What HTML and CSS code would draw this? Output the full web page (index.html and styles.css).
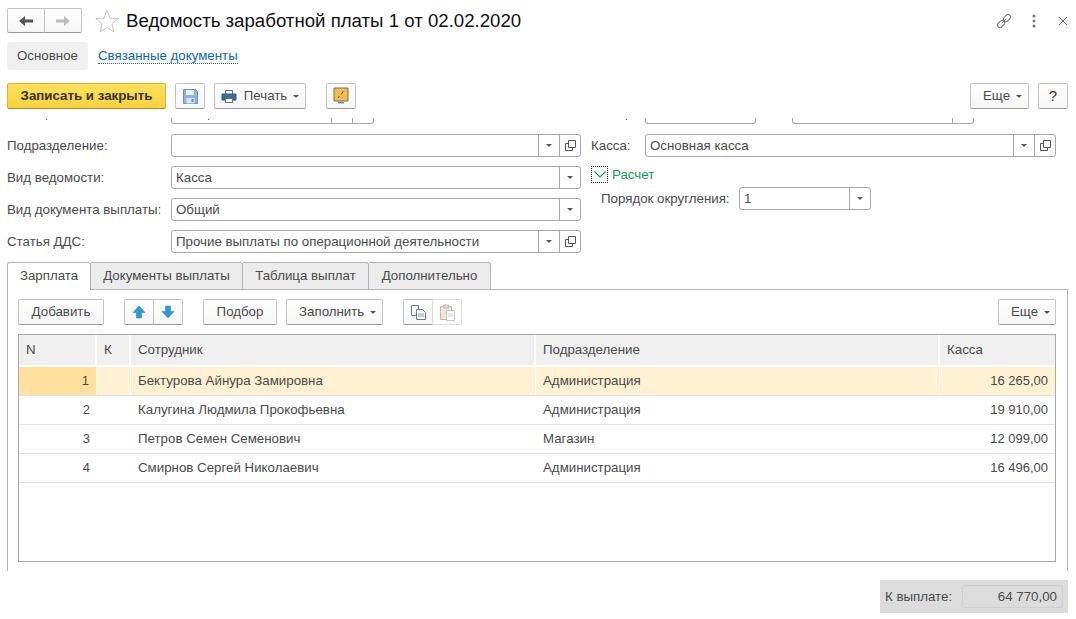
FILE: index.html
```html
<!DOCTYPE html>
<html lang="ru">
<head>
    <meta charset="UTF-8">
    <title>Ведомость заработной платы</title>
    <link rel="stylesheet" href="styles.css">
</head>
<body>
<!-- заголовок -->
<header class="title-bar">
    <div class="btn-group history">
        <button class="btn icon-btn"><svg width="16" height="12" viewBox="0 0 16 12"><path d="M1 6l6-5v3.500h8v3H7V11z" fill="#555"/></svg></button>
        <button class="btn icon-btn"><svg width="16" height="12" viewBox="0 0 16 12"><path d="M15 6L9 1v3.500H1v3h8V11z" fill="#bbb"/></svg></button>
    </div>
    <svg class="star" width="24" height="24" viewBox="0 0 24 24"><path d="M12 1.500l3 7.600 8.200.6-6.300 5.200 2 8-6.900-4.400-6.900 4.400 2-8L.8 9.700 9 9.100z" fill="#fff" stroke="#c4c4c4"/></svg>
    <h1 class="title">Ведомость заработной платы 1 от 02.02.2020</h1>
    <div class="window-tools">
        <svg width="16" height="16" viewBox="0 0 16 16" fill="none" stroke="#777" stroke-width="1"><rect x="7" y="2.500" width="8" height="5" rx="2.500" transform="rotate(-45 11 5)"/><rect x="1" y="8.500" width="8" height="5" rx="2.500" transform="rotate(-45 5 11)"/><path d="M6 10l4-4"/></svg>
        <svg class="dots" width="4" height="14" viewBox="0 0 4 14"><circle cx="2" cy="2" r="1.500" fill="#777"/><circle cx="2" cy="7" r="1.500" fill="#777"/><circle cx="2" cy="12" r="1.500" fill="#777"/></svg>
        <svg width="10" height="10" viewBox="0 0 10 10"><path d="M1 1l8 8M9 1l-8 8" stroke="#666" stroke-width="1"/></svg>
    </div>
</header>

<!-- навигация -->
<nav class="nav-bar">
    <span class="nav-current">Основное</span>
    <a class="nav-link">Связанные документы</a>
</nav>

<!-- командная панель -->
<div class="toolbar main-toolbar">
    <button class="btn btn-primary">Записать и закрыть</button>
    <button class="btn icon-btn save"><svg width="15" height="15" viewBox="0 0 15 15"><path d="M.5.5h12l2 2v12H.5z" fill="#8fb4d9" stroke="#6d93bb"/><path d="M3 1h8v5H3z" fill="#eef3f9"/><path d="M3.500 9h8v5.500h-8z" fill="#d6e2ee"/><path d="M8.500 10h2v3h-2z" fill="#6d93bb"/></svg></button>
    <button class="btn print"><svg width="16" height="15" viewBox="0 0 16 15"><path d="M4.500 1.500h7v4h-7z" fill="#fff" stroke="#56708c"/><path d="M1 5h14v6H1z" fill="#3f6f98" stroke="#2f5a80"/><path d="M4.500 9.500h7v4h-7z" fill="#fff" stroke="#56708c"/></svg><span>Печать</span><i class="caret"></i></button>
    <button class="btn icon-btn note"><svg width="16" height="18" viewBox="0 0 16 18"><path d="M1 1h14v13H1z" fill="#efbd52" stroke="#7f7350"/><path d="M5 11l1.500-2M8 7.500L10.500 4" stroke="#6b5a20" stroke-width="1"/><path d="M5 15.500h6" stroke="#8a8a8a" stroke-width="2"/></svg></button>
    <div class="spacer"></div>
    <button class="btn more">Еще<i class="caret"></i></button>
    <button class="btn help">?</button>
</div>

<!-- реквизиты -->
<section class="form-area">
    <div class="form-cut">
        <i class="cut-mark mark-one"></i>
        <div class="cut-field cut-one"><i class="cut-mark mark-inner"></i><i class="cut-cell first-cell"></i><i class="cut-cell"></i></div>
        <i class="cut-mark mark-two"></i>
        <div class="cut-field cut-two"></div>
        <div class="cut-field cut-three"><i class="cut-cell first-cell"></i></div>
    </div>
    <div class="form-cols">
        <div class="form-left">
            <div class="form-row">
                <label>Подразделение:</label>
                <div class="field"><span class="value"></span><i class="field-btn"><b class="caret"></b></i><i class="field-btn"><svg width="11" height="11" viewBox="0 0 11 11"><path d="M3.500.5h7v7h-7z M3.500 3.500H.5v7h7V7.500" fill="none" stroke="#555"/></svg></i></div>
            </div>
            <div class="form-row">
                <label>Вид ведомости:</label>
                <div class="field"><span class="value">Касса</span><i class="field-btn"><b class="caret"></b></i></div>
            </div>
            <div class="form-row">
                <label>Вид документа выплаты:</label>
                <div class="field"><span class="value">Общий</span><i class="field-btn"><b class="caret"></b></i></div>
            </div>
            <div class="form-row">
                <label>Статья ДДС:</label>
                <div class="field"><span class="value">Прочие выплаты по операционной деятельности</span><i class="field-btn"><b class="caret"></b></i><i class="field-btn"><svg width="11" height="11" viewBox="0 0 11 11"><path d="M3.500.5h7v7h-7z M3.500 3.500H.5v7h7V7.500" fill="none" stroke="#555"/></svg></i></div>
            </div>
        </div>
        <div class="form-right">
            <div class="form-row">
                <label class="label-short">Касса:</label>
                <div class="field"><span class="value">Основная касса</span><i class="field-btn"><b class="caret"></b></i><i class="field-btn"><svg width="11" height="11" viewBox="0 0 11 11"><path d="M3.500.5h7v7h-7z M3.500 3.500H.5v7h7V7.500" fill="none" stroke="#555"/></svg></i></div>
            </div>
            <div class="group-head">
                <span class="group-toggle"><svg width="12" height="7" viewBox="0 0 12 7"><path d="M.5.5L6 6 11.500.5" fill="none" stroke="#0f9d58" stroke-width="1.200"/></svg></span>
                <span class="group-title">Расчет</span>
            </div>
            <div class="form-row group-row">
                <label>Порядок округления:</label>
                <div class="field field-small"><span class="value">1</span><i class="field-btn"><b class="caret"></b></i></div>
            </div>
        </div>
    </div>
</section>

<!-- вкладки -->
<div class="tabs">
    <span class="tab active">Зарплата</span>
    <span class="tab">Документы выплаты</span>
    <span class="tab">Таблица выплат</span>
    <span class="tab">Дополнительно</span>
</div>
<main class="tab-panel">
    <div class="toolbar panel-toolbar">
        <button class="btn add">Добавить</button>
        <div class="btn-group arrows">
            <button class="btn icon-btn"><svg width="14" height="14" viewBox="0 0 14 14"><path d="M7 1l6 6.500H9.500V13h-5V7.500H1z" fill="#2b9bd6" stroke="#1f7fb3" stroke-width=".5"/></svg></button>
            <button class="btn icon-btn"><svg width="14" height="14" viewBox="0 0 14 14"><path d="M7 13L1 6.500h3.500V1h5v5.500H13z" fill="#2b9bd6" stroke="#1f7fb3" stroke-width=".5"/></svg></button>
        </div>
        <button class="btn pick">Подбор</button>
        <button class="btn fill">Заполнить<i class="caret"></i></button>
        <div class="btn-group clip">
            <button class="btn icon-btn"><svg width="17" height="17" viewBox="0 0 17 17"><path d="M1.500 1.500h7v10h-7z" fill="#fff" stroke="#6c7f92"/><path d="M6.500 5.500h6l3 3v7h-9z" fill="#fff" stroke="#6c7f92"/><path d="M8 10h6M8 12h6" stroke="#8a9aa9"/></svg></button>
            <button class="btn icon-btn off"><svg width="17" height="17" viewBox="0 0 17 17"><path d="M1.500 2.500h11v13h-11z" fill="#f1e4d8" stroke="#cdb5a3"/><path d="M4.500 1h5v3h-5z" fill="#ddd" stroke="#bbb"/><path d="M7.500 6.500h8v10h-8z" fill="#fff" stroke="#c5c5c5"/><path d="M9 10h5M9 12h5" stroke="#ccc"/></svg></button>
        </div>
        <div class="spacer"></div>
        <button class="btn more more-small">Еще<i class="caret"></i></button>
    </div>
    <div class="grid">
        <div class="grid-row grid-head">
            <div class="cell">N</div>
            <div class="cell">К</div>
            <div class="cell">Сотрудник</div>
            <div class="cell">Подразделение</div>
            <div class="cell">Касса</div>
        </div>
        <div class="grid-row selected">
            <div class="cell num current">1</div>
            <div class="cell"></div>
            <div class="cell">Бектурова Айнура Замировна</div>
            <div class="cell">Администрация</div>
            <div class="cell num">16 265,00</div>
        </div>
        <div class="grid-row">
            <div class="cell num">2</div>
            <div class="cell"></div>
            <div class="cell">Калугина Людмила Прокофьевна</div>
            <div class="cell">Администрация</div>
            <div class="cell num">19 910,00</div>
        </div>
        <div class="grid-row">
            <div class="cell num">3</div>
            <div class="cell"></div>
            <div class="cell">Петров Семен Семенович</div>
            <div class="cell">Магазин</div>
            <div class="cell num">12 099,00</div>
        </div>
        <div class="grid-row">
            <div class="cell num">4</div>
            <div class="cell"></div>
            <div class="cell">Смирнов Сергей Николаевич</div>
            <div class="cell">Администрация</div>
            <div class="cell num">16 496,00</div>
        </div>
    </div>
</main>

<!-- итог -->
<footer class="totals">
    <div class="total-box">
        <span>К выплате:</span>
        <span class="total-value">64 770,00</span>
    </div>
</footer>
</body>
</html>
```

FILE: styles.css
```css
* { margin: 0; padding: 0; box-sizing: border-box; }
html, body { height: 100%; overflow: hidden; }
body {
    background: #fff;
    color: #4b4b4b;
    font: 13.3px/16px "Liberation Sans", Arial, sans-serif;
    padding: 0 8px 0 7px;
}
button { font: inherit; color: inherit; outline: none; }
i, b { font-style: normal; font-weight: normal; }
.spacer { flex: 1; }

/* кнопки */
.btn {
    display: inline-flex;
    align-items: center;
    justify-content: center;
    height: 26px;
    background: linear-gradient(#fff, #f6f6f6);
    border: 1px solid #c4c4c4;
    border-bottom-color: #9a9a9a;
    border-radius: 2px;
}
.btn-group { display: flex; }
.btn-group .btn:first-child { border-radius: 2px 0 0 2px; }
.btn-group .btn:last-child { border-radius: 0 2px 2px 0; margin-left: -1px; }
.caret {
    display: inline-block;
    width: 0;
    height: 0;
    border: 3px solid transparent;
    border-top: 3px solid #555;
    border-bottom: 0;
}
.btn .caret { margin-left: 6px; }

/* заголовок */
.title-bar {
    display: flex;
    align-items: center;
    height: 42px;
    padding-bottom: 1px;
}
.history .btn { width: 38px; height: 25px; }
.star { margin-left: 13px; }
.title {
    margin-left: 7px;
    font-size: 18.65px;
    font-weight: normal;
    color: #111;
    line-height: 24px;
}
.window-tools {
    margin-left: auto;
    display: flex;
    align-items: center;
}
.dots { margin: 0 0 0 20px; }
.window-tools svg:last-child { margin-left: 22px; }

/* навигация */
.nav-bar {
    display: flex;
    align-items: center;
    height: 28px;
}
.nav-current {
    width: 81px;
    height: 28px;
    line-height: 28px;
    text-align: center;
    background: #f0f0f0;
    border-radius: 3px;
}
.nav-link {
    margin-left: 10px;
    color: #0b66c3;
    border-bottom: 1px dotted #0b66c3;
    line-height: 14px;
}

/* панели */
.toolbar { display: flex; align-items: center; }
.main-toolbar { margin-top: 13px; height: 26px; }
.btn-primary {
    width: 159px;
    background: linear-gradient(#fde05b, #f8d33c);
    border-color: #d9b52c;
    border-bottom-color: #a98c1e;
    color: #333;
    font-weight: bold;
}
.save { width: 30px; margin-left: 9px; }
.print { width: 92px; margin-left: 9px; }
.print span { margin-left: 7px; }
.note { width: 30px; margin-left: 20px; }
.more { width: 59px; justify-content: flex-start; padding-left: 12px; }
.more-small { width: 58px; }
.help { width: 30px; margin-left: 9px; font-size: 15px; color: #333; }

/* реквизиты */
.form-area { margin-top: 9px; }
/* верхняя строка уехала под панель, видны только низы полей */
.form-cut {
    display: flex;
    height: 6px;
    overflow: hidden;
}
.cut-mark {
    display: block;
    flex: none;
    width: 1px;
    height: 1px;
    margin-top: 1px;
    background: #555;
}
.mark-one { margin-left: 39px; }
.mark-inner { margin-left: 36px; margin-right: auto; }
.mark-two { margin-left: 252px; }
.cut-field {
    display: flex;
    justify-content: flex-end;
    height: 6px;
    border: 1px solid #a8a8a8;
    border-top: 0;
    border-radius: 0 0 3px 3px;
}
.cut-one { width: 203px; margin-left: 124px; }
.cut-two { width: 111px; margin-left: 18px; }
.cut-three { width: 182px; margin-left: 36px; }
.cut-cell {
    display: block;
    width: 21px;
    border-left: 1px solid #a8a8a8;
}
.form-cols {
    display: flex;
    margin-top: 10px;
}
.form-left { width: 574px; }
.form-right { margin-left: 10px; width: 465px; }
.form-row {
    display: flex;
    align-items: center;
    height: 23px;
    margin-bottom: 9px;
}
.form-row label { width: 164px; flex: none; }
.form-row .label-short { width: 54px; }
.field {
    flex: 1;
    display: flex;
    height: 23px;
    border: 1px solid #a8a8a8;
    border-radius: 3px;
    line-height: 21px;
}
.value { flex: 1; padding-left: 4px; white-space: nowrap; }
.field-btn {
    display: flex;
    align-items: center;
    justify-content: center;
    width: 21px;
    border-left: 1px solid #a8a8a8;
}
.group-head {
    display: flex;
    align-items: center;
    height: 17px;
}
.group-toggle {
    display: flex;
    align-items: center;
    justify-content: center;
    width: 17px;
    height: 17px;
    border: 1px dotted #222;
}
.group-title { margin-left: 4px; color: #0f9d58; }
.group-row { margin: 4px 0 0 10px; }
.group-row label { width: 138px; }
.field-small { flex: none; width: 132px; }

/* вкладки */
.tabs {
    display: grid;
    grid-template-columns: 84px 152px 126px 122px;
    height: 28px;
}
.tab {
    height: 28px;
    line-height: 25px;
    text-align: center;
    background: #ececec;
    border: 1px solid #b4b4b4;
    border-left: 0;
    border-radius: 0 3px 0 0;
}
.tab.active {
    background: #fff;
    border-left: 1px solid #b4b4b4;
    border-bottom: 0;
    border-radius: 3px 3px 0 0;
    position: relative;
    z-index: 1;
}
.tab-panel {
    height: 282px;
    margin-top: -1px;
    padding: 9px 11px 0 10px;
    border: 1px solid #b4b4b4;
    border-bottom: 0;
    width: 1061px;
}
.add { width: 86px; }
.arrows { margin-left: 20px; }
.arrows .btn { width: 30px; }
.pick { width: 74px; margin-left: 20px; }
.fill { width: 97px; margin-left: 9px; justify-content: flex-start; padding-left: 12px; }
.clip { margin-left: 20px; }
.clip .btn { width: 30px; }
.clip .off { border-color: #ddd; background: #fff; }

/* таблица */
.grid {
    margin-top: 9px;
    height: 228px;
    border: 1px solid #a8a8a8;
}
.grid-row {
    display: grid;
    grid-template-columns: 78px 34px 405px 404px 1fr;
    height: 29px;
    border-bottom: 1px solid #e4e4e4;
    line-height: 28px;
}
.cell { padding: 0 7px; white-space: nowrap; }
.num { text-align: right; font-size: 13px; }
.grid-head {
    height: 32px;
    border-bottom: 0;
    line-height: 30px;
}
.grid-head .cell {
    background: #f0f0f0;
    border-right: 2px solid #fff;
    border-bottom: 2px solid #fff;
}
.grid-head .cell:last-child { border-right: 0; }
.selected { background: #fff1d2; height: 29px; }
.selected .cell { border-right: 1px solid #fff; }
.selected .cell:last-child { border-right: 0; }
.selected .current { background: #ffe09d; }

/* итог */
.totals {
    display: flex;
    justify-content: flex-end;
    margin-top: 9px;
}
.total-box {
    display: flex;
    align-items: center;
    width: 188px;
    height: 33px;
    padding: 0 5px;
    background: #dcdcdc;
}
.total-value {
    margin-left: auto;
    width: 101px;
    height: 23px;
    line-height: 21px;
    text-align: right;
    padding-right: 5px;
    border: 1px solid #d0d0d0;
    border-radius: 3px;
}
```
